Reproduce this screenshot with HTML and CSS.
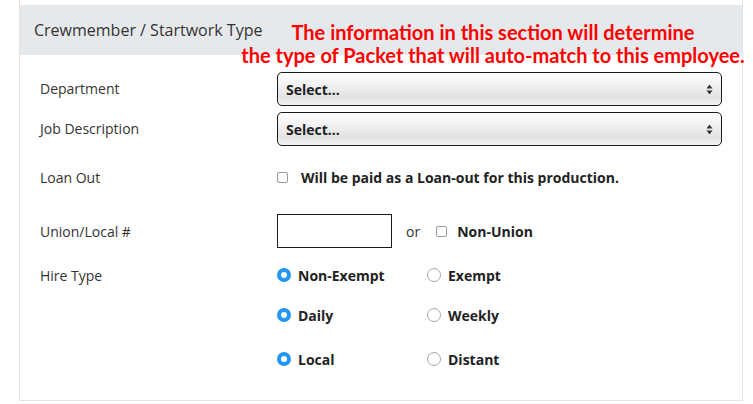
FILE: index.html
```html
<!DOCTYPE html>
<html>
<head>
<meta charset="utf-8">
<link rel="stylesheet" href="styles.css">
</head>
<body>
<div class="panel">
  <div class="panel-head">
    <span class="head-title">Crewmember / Startwork Type</span>
    <div class="notice">The information in this section will determine<br>the type of Packet that will auto-match to this employee.</div>
  </div>
  <div class="panel-body">
    <div class="row row-dept">
      <div class="label">Department</div>
      <div class="select"><span>Select...</span>
        <svg class="arrows" width="7" height="11" viewBox="0 0 7 11"><path d="M3.5 0.5 L6.5 4.5 L0.5 4.5 Z M3.5 10.5 L6.5 6.5 L0.5 6.5 Z" fill="#333"/></svg>
      </div>
    </div>
    <div class="row row-job">
      <div class="label">Job Description</div>
      <div class="select"><span>Select...</span>
        <svg class="arrows" width="7" height="11" viewBox="0 0 7 11"><path d="M3.5 0.5 L6.5 4.5 L0.5 4.5 Z M3.5 10.5 L6.5 6.5 L0.5 6.5 Z" fill="#333"/></svg>
      </div>
    </div>
    <div class="row row-loan">
      <div class="label">Loan Out</div>
      <div class="control">
        <span class="checkbox"></span>
        <span class="opt-text">Will be paid as a Loan-out for this production.</span>
      </div>
    </div>
    <div class="row row-union">
      <div class="label">Union/Local #</div>
      <div class="control">
        <span class="textbox"></span>
        <span class="or">or</span>
        <span class="checkbox"></span>
        <span class="opt-text">Non-Union</span>
      </div>
    </div>
    <div class="row row-hire1">
      <div class="label">Hire Type</div>
      <div class="control">
        <div class="opt"><span class="radio on"></span><span class="opt-text">Non-Exempt</span></div>
        <div class="opt"><span class="radio"></span><span class="opt-text">Exempt</span></div>
      </div>
    </div>
    <div class="row row-hire2">
      <div class="label"></div>
      <div class="control">
        <div class="opt"><span class="radio on"></span><span class="opt-text">Daily</span></div>
        <div class="opt"><span class="radio"></span><span class="opt-text">Weekly</span></div>
      </div>
    </div>
    <div class="row row-hire3">
      <div class="label"></div>
      <div class="control">
        <div class="opt"><span class="radio on"></span><span class="opt-text">Local</span></div>
        <div class="opt"><span class="radio"></span><span class="opt-text">Distant</span></div>
      </div>
    </div>
  </div>
</div>
</body>
</html>
```
FILE: styles.css
```css
html, body {
  margin: 0;
  padding: 0;
  background: #fff;
}
body {
  font-family: "Open Sans", "Liberation Sans", sans-serif;
  color: #333;
  overflow: hidden;
}
.panel {
  margin-left: 19px;
  width: 722px;
  border: 1px solid #e4e4e4;
  border-top: none;
  padding-top: 5px;
  height: 395px;
}
.panel-head {
  position: relative;
  height: 50px;
  background: #e6e9ec;
  display: flex;
  align-items: center;
  padding-left: 14px;
}
.head-title {
  font-size: 16px;
  color: #333;
}
.notice {
  position: absolute;
  left: 193px;
  top: 16px;
  width: 560px;
  text-align: center;
  font-family: Lato, "Liberation Sans", sans-serif;
  font-weight: bold;
  font-size: 20px;
  line-height: 23px;
  color: #ff0000;
  white-space: nowrap;
}
.panel-body {
  padding-left: 20px;
  display: flex;
  flex-direction: column;
}
.row {
  display: flex;
  align-items: center;
}
.label {
  width: 237px;
  flex: none;
  font-size: 14px;
  color: #333;
}
.row-dept { margin-top: 17px; height: 34px; }
.row-job { margin-top: 6px; height: 34px; }
.row-loan { margin-top: 12px; height: 38px; }
.row-union { margin-top: 18px; height: 34px; }
.row-hire1 { margin-top: 15px; height: 24px; }
.row-hire2 { margin-top: 16px; height: 24px; }
.row-hire3 { margin-top: 20px; height: 24px; }
.row-dept .label, .row-job .label { margin-top: -2px; }
.select {
  box-sizing: border-box;
  width: 445px;
  height: 34px;
  border: 1px solid #1a1a1a;
  border-radius: 5px;
  background: linear-gradient(#ffffff, #f4f4f4 30%, #e3e3e3 75%, #f2f2f2);
  display: flex;
  align-items: center;
  justify-content: space-between;
  padding: 0 8px 0 8px;
  font-size: 14px;
  font-weight: bold;
  color: #222;
}
.arrows { display: block; }
.control {
  display: flex;
  align-items: center;
}
.checkbox {
  box-sizing: border-box;
  width: 11px;
  height: 11px;
  border: 1px solid #9a9a9a;
  border-radius: 2px;
  background: #fff;
  flex: none;
}
.opt-text {
  font-size: 14px;
  font-weight: bold;
  color: #222;
}
.row-loan .checkbox { margin-right: 13px; }
.textbox {
  box-sizing: border-box;
  width: 115px;
  height: 34px;
  border: 1px solid #1a1a1a;
  background: #fff;
}
.or {
  font-size: 14px;
  color: #333;
  margin-left: 14px;
  margin-right: 16px;
}
.row-union .checkbox { margin-right: 10px; }
.opt {
  display: flex;
  align-items: center;
  width: 150px;
}
.radio {
  box-sizing: border-box;
  width: 14px;
  height: 14px;
  border-radius: 50%;
  border: 1px solid #a8a8a8;
  background: #fff;
  margin-right: 7px;
  flex: none;
}
.radio.on {
  border: 4px solid #2196f3;
  background: #fff;
}
```
